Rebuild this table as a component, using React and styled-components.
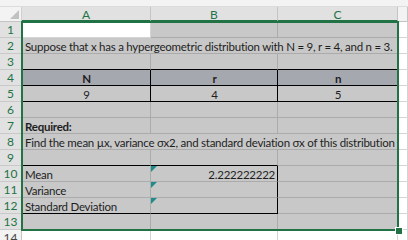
import React from "react";
import styled, { createGlobalStyle } from "styled-components";

const Global = createGlobalStyle`
  html, body { margin: 0; padding: 0; background: #ffffff; }
  body { font-family: "Lato", "Liberation Sans", sans-serif; }
`;

const GREEN = "#217346";
const GRID_SEL = "#ababab";
const GRID = "#d4d4d4";
const SEL_BG = "#c8c8c8";

const Sheet = styled.div`
  position: relative;
  width: 408px;
  height: 240px;
  overflow: hidden;
  display: grid;
  grid-template-columns: 22px 129px 127px 120px 1fr;
  grid-template-rows: 7px 15px repeat(14, 16px);
  font-size: 11.5px;
  color: #222;
`;

const TopStrip = styled.div`
  grid-column: 1 / -1;
  background: #f3f3f3;
  border-bottom: 1px solid #dcdcdc;
  box-sizing: border-box;
`;

const Corner = styled.div`
  position: relative;
  background: #f3f3f3;
  border-right: 1px solid #d0d0d0;
  border-bottom: 1px solid #c4c4c4;
  box-sizing: border-box;
`;

const CornerTri = styled.div`
  position: absolute;
  right: 2px;
  bottom: 2px;
  width: 0;
  height: 0;
  border-left: 9px solid transparent;
  border-bottom: 9px solid #c1c1c1;
`;

const ColHead = styled.div`
  display: flex;
  align-items: center;
  justify-content: center;
  box-sizing: border-box;
  background: ${(p) => (p.$sel ? "#e1e1e1" : "#f3f3f3")};
  color: ${(p) => (p.$sel ? GREEN : "#444")};
  border-right: 1px solid #c4c4c4;
  border-bottom: ${(p) => (p.$sel ? `2px solid ${GREEN}` : "1px solid #c4c4c4")};
  font-size: 12px;
  padding-top: 1px;
`;

const RowHead = styled.div`
  display: flex;
  align-items: center;
  justify-content: center;
  box-sizing: border-box;
  background: ${(p) => (p.$sel ? "#e1e1e1" : "#f3f3f3")};
  color: ${(p) => (p.$sel ? GREEN : "#444")};
  border-bottom: 1px solid ${(p) => (p.$sel ? "#c9c9c9" : "#d6d6d6")};
  border-right: 1px solid #c4c4c4;
  font-size: 12px;
`;

const Cell = styled.div`
  position: relative;
  box-sizing: border-box;
  display: flex;
  align-items: center;
  justify-content: ${(p) =>
    p.$align === "center" ? "center" : p.$align === "right" ? "flex-end" : "flex-start"};
  padding: 1px 2px 0 3px;
  white-space: nowrap;
  overflow: visible;
  letter-spacing: -0.25px;
  grid-column: ${(p) => (p.$span ? `span ${p.$span}` : "auto")};
  background: ${(p) => p.$bg || (p.$sel ? SEL_BG : "#ffffff")};
  font-weight: ${(p) => (p.$bold ? 700 : 400)};
  border-right: 1px solid ${(p) => p.$r || (p.$sel ? GRID_SEL : GRID)};
  border-bottom: 1px solid ${(p) => p.$b || (p.$sel ? GRID_SEL : GRID)};
  color: #1e1e1e;
`;

const Tri = styled.span`
  position: absolute;
  left: 0;
  top: 0;
  width: 0;
  height: 0;
  border-top: 6px solid #1e8c8c;
  border-right: 6px solid transparent;
`;

const Selection = styled.div`
  position: absolute;
  left: 21px;
  top: 21px;
  width: 378px;
  height: 210px;
  box-sizing: border-box;
  border: 2px solid ${GREEN};
  pointer-events: none;
`;

const Handle = styled.div`
  position: absolute;
  left: 395px;
  top: 227px;
  width: 6px;
  height: 6px;
  background: ${GREEN};
  border: 1px solid #ffffff;
`;

const K = "#000000";
const HEADBG = "#a6a8b0";

const rows = [
  [{ t: "", white: true }, {}, {}],
  [{ t: "Suppose that x has a hypergeometric distribution with N = 9, r = 4, and n = 3.", span: 3 }],
  [{ b: K }, { b: K }, { b: K }],
  [
    { t: "N", bold: true, align: "center", bg: HEADBG, b: K, r: K },
    { t: "r", bold: true, align: "center", bg: HEADBG, b: K, r: K },
    { t: "n", bold: true, align: "center", bg: HEADBG, b: K, r: K },
  ],
  [
    { t: "9", align: "center", b: K, r: K },
    { t: "4", align: "center", b: K, r: K },
    { t: "5", align: "center", b: K, r: K },
  ],
  [{}, {}, {}],
  [{ t: "Required:", bold: true }, {}, {}],
  [{ t: "Find the mean \u00b5x, variance \u03c3x2, and standard deviation \u03c3x of this distribution", span: 3 }],
  [{ b: K }, { b: K }, {}],
  [{ t: "Mean" }, { t: "2.222222222", align: "right", r: K, tri: true }, {}],
  [{ t: "Variance" }, { r: K, tri: true }, {}],
  [{ t: "Standard Deviation", b: K }, { r: K, b: K, tri: true }, {}],
  [{}, {}, {}],
];

export default function App() {
  return (
    <>
      <Global />
      <Sheet>
        <TopStrip />
        <Corner>
          <CornerTri />
        </Corner>
        <ColHead $sel>A</ColHead>
        <ColHead $sel>B</ColHead>
        <ColHead $sel>C</ColHead>
        <ColHead />
        {rows.map((cells, i) => (
          <React.Fragment key={i}>
            <RowHead $sel>{i + 1}</RowHead>
            {cells.map((c, j) => (
              <Cell
                key={j}
                $sel={!c.white}
                $span={c.span}
                $align={c.align}
                $bold={c.bold}
                $bg={c.bg}
                $b={c.b}
                $r={c.r}
              >
                {c.tri && <Tri />}
                {c.t}
              </Cell>
            ))}
            <Cell />
          </React.Fragment>
        ))}
        <RowHead>14</RowHead>
        <Cell />
        <Cell />
        <Cell />
        <Cell />
        <Selection />
        <Handle />
      </Sheet>
    </>
  );
}
